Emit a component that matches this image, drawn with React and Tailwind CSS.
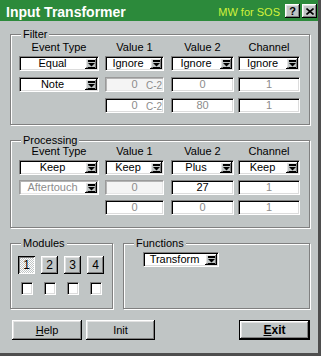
const font = "font-['Liberation_Sans',Arial,sans-serif]";
const sunken =
  'border border-t-[#808080] border-l-[#808080] border-b-white border-r-white shadow-[inset_1px_1px_0_#000,inset_-1px_-1px_0_#dcdcdc]';
const sunkenDim =
  'border border-t-[#9a9a9a] border-l-[#9a9a9a] border-b-white border-r-white shadow-[inset_1px_1px_0_#b4b4b4,inset_-1px_-1px_0_#e6e6e6]';
const raised =
  'shadow-[inset_-1px_-1px_0_#000,inset_1px_1px_0_#fff,inset_-2px_-2px_0_#808080,inset_2px_2px_0_#e2e2e2]';
const etched = 'border border-[#808080] shadow-[inset_1px_1px_0_#fff,1px_1px_0_#fff]';

function Arrow() {
  return (
    <svg width="7" height="8" viewBox="0 0 7 8">
      <rect x="0" y="0" width="7" height="2" fill="#000" />
      <polygon points="0,3 7,3 3.5,6.5" fill="#000" />
      <rect x="0" y="7" width="7" height="1" fill="#000" />
    </svg>
  );
}

function Drop({ label, w, dim }) {
  return (
    <div className={`${w} h-[15px] flex items-stretch bg-white ${dim ? sunkenDim : sunken}`}>
      <span
        className={`flex-1 flex items-center justify-center text-[11px] leading-[13px] ${
          dim ? 'text-[#8c8c8c]' : 'text-black'
        }`}
      >
        {label}
      </span>
      <span className={`w-[12px] my-[1px] mr-[1px] bg-[#c0c5c5] flex items-center justify-center ${raised}`}>
        <Arrow />
      </span>
    </div>
  );
}

function Num({ value, w, dim, dark, note }) {
  return (
    <div
      className={`${w} h-[15px] relative overflow-hidden flex items-center justify-center text-[11px] leading-[13px] ${
        dim ? 'bg-[#f4f4f4] ' + sunkenDim : 'bg-white ' + sunken
      } ${dark ? 'text-black' : 'text-[#8c8c8c]'}`}
    >
      {value}
      {note && <span className="absolute left-[40px] top-[2px] text-[10px] leading-[11px]">{note}</span>}
    </div>
  );
}

function Headers() {
  return (
    <div className="grid grid-cols-[86px_66px_67px_62px] text-[11px] leading-[13px] mb-[2px]">
      <span className="w-[80px] text-center">Event Type</span>
      <span className="w-[59px] text-center">Value 1</span>
      <span className="w-[63px] text-center">Value 2</span>
      <span className="w-[62px] text-center">Channel</span>
    </div>
  );
}

function Row({ children }) {
  return <div className="grid grid-cols-[86px_66px_67px_62px] h-[15px]">{children}</div>;
}

function Group({ title, className, children }) {
  return (
    <div className={`relative ${etched} ${className}`}>
      <span className="absolute -top-[7px] left-[10px] px-[2px] bg-[#c0c5c5] text-[11px] leading-[13px]">
        {title}
      </span>
      {children}
    </div>
  );
}

function Button({ children, w, def }) {
  const inner = (
    <div className={`${def ? 'w-full h-full' : w + ' h-[20px]'} flex items-center justify-center bg-[#c0c5c5] ${raised}`}>
      {children}
    </div>
  );
  if (def) return <div className={`${w} h-[20px] border border-black`}>{inner}</div>;
  return inner;
}

export default function App() {
  return (
    <div className={`${font} w-[321px] h-[356px] bg-[#c0c5c5] text-black border-r-[3px] border-b-[3px] border-[#4e4e4e] flex flex-col`}>
      <div className="h-[21px] bg-[#2c8a3b] flex items-start pl-[6px] pr-[1px]">
        <span className="pt-[4px] text-[14px] leading-[16px] font-bold text-white">Input Transformer</span>
        <span className="ml-auto pt-[6px] text-[11px] leading-[13px] text-[#d2f23c]">MW for SOS</span>
        <span className={`ml-[5px] mt-[4px] w-[15px] h-[14px] bg-[#c0c5c5] flex items-center justify-center text-[11px] font-bold ${raised}`}>
          ?
        </span>
        <span className={`ml-[2px] mt-[4px] w-[15px] h-[14px] bg-[#c0c5c5] flex items-center justify-center ${raised}`}>
          <svg width="8" height="7" viewBox="0 0 8 7">
            <path d="M0.5 0.5 L7.5 6.5 M7.5 0.5 L0.5 6.5" stroke="#000" strokeWidth="1.6" />
          </svg>
        </span>
      </div>

      <Group title="Filter" className="ml-[10px] mt-[13px] w-[300px] h-[91px] pt-[6px] pl-[8px]">
        <Headers />
        <div className="flex flex-col gap-[6px]">
          <Row>
            <Drop label="Equal" w="w-[80px]" />
            <Drop label="Ignore" w="w-[59px]" />
            <Drop label="Ignore" w="w-[63px]" />
            <Drop label="Ignore" w="w-[62px]" />
          </Row>
          <Row>
            <Drop label="Note" w="w-[80px]" />
            <Num value="0" note="C-2" w="w-[59px]" dim />
            <Num value="0" w="w-[63px]" />
            <Num value="1" w="w-[62px]" />
          </Row>
          <Row>
            <span />
            <Num value="0" note="C-2" w="w-[59px]" />
            <Num value="80" w="w-[63px]" />
            <Num value="1" w="w-[62px]" />
          </Row>
        </div>
      </Group>

      <Group title="Processing" className="ml-[10px] mt-[15px] w-[300px] h-[88px] pt-[4px] pl-[8px]">
        <div className="mb-[1px]">
          <Headers />
        </div>
        <div className="flex flex-col gap-[5px]">
          <Row>
            <Drop label="Keep" w="w-[80px]" />
            <Drop label="Keep" w="w-[59px]" />
            <Drop label="Plus" w="w-[63px]" />
            <Drop label="Keep" w="w-[62px]" />
          </Row>
          <Row>
            <Drop label="Aftertouch" w="w-[80px]" dim />
            <Num value="0" w="w-[59px]" dim />
            <Num value="27" w="w-[63px]" dark />
            <Num value="1" w="w-[62px]" />
          </Row>
          <Row>
            <span />
            <Num value="0" w="w-[59px]" />
            <Num value="0" w="w-[63px]" />
            <Num value="1" w="w-[62px]" />
          </Row>
        </div>
      </Group>

      <div className="flex ml-[10px] mt-[15px] gap-[10px]">
        <Group title="Modules" className="w-[103px] h-[66px] pt-[12px] pl-[7px]">
          <div className="grid grid-cols-[17px_17px_17px_17px] gap-x-[6px] gap-y-[8px]">
            {['1', '2', '3', '4'].map((n, i) => (
              <span
                key={n}
                className={`h-[18px] flex items-center justify-center text-[12px] ${
                  i === 0
                    ? 'bg-[repeating-conic-gradient(#ffffff_0_25%,#c0c5c5_0_50%)] bg-[length:2px_2px] shadow-[inset_1px_1px_0_#000,inset_-1px_-1px_0_#fff,inset_2px_2px_0_#808080]'
                    : 'bg-[#c0c5c5] ' + raised
                }`}
              >
                {n}
              </span>
            ))}
            {[0, 1, 2, 3].map((i) => (
              <span key={i} className="flex justify-center">
                <span className={`w-[12px] h-[13px] bg-white ${sunken}`} />
              </span>
            ))}
          </div>
        </Group>
        <Group title="Functions" className="w-[187px] h-[66px] pt-[8px] pl-[19px]">
          <Drop label="Transform" w="w-[76px]" />
        </Group>
      </div>

      <div className="flex ml-[12px] mt-[11px] text-[11px]">
        <Button w="w-[70px]">
          <span>
            <span className="underline">H</span>elp
          </span>
        </Button>
        <div className="ml-[4px]">
          <Button w="w-[69px]">Init</Button>
        </div>
        <div className="ml-auto mr-[8px]">
          <Button w="w-[71px]" def>
            <span className="font-bold text-[12px]">
              <span className="underline">E</span>xit
            </span>
          </Button>
        </div>
      </div>
    </div>
  );
}
